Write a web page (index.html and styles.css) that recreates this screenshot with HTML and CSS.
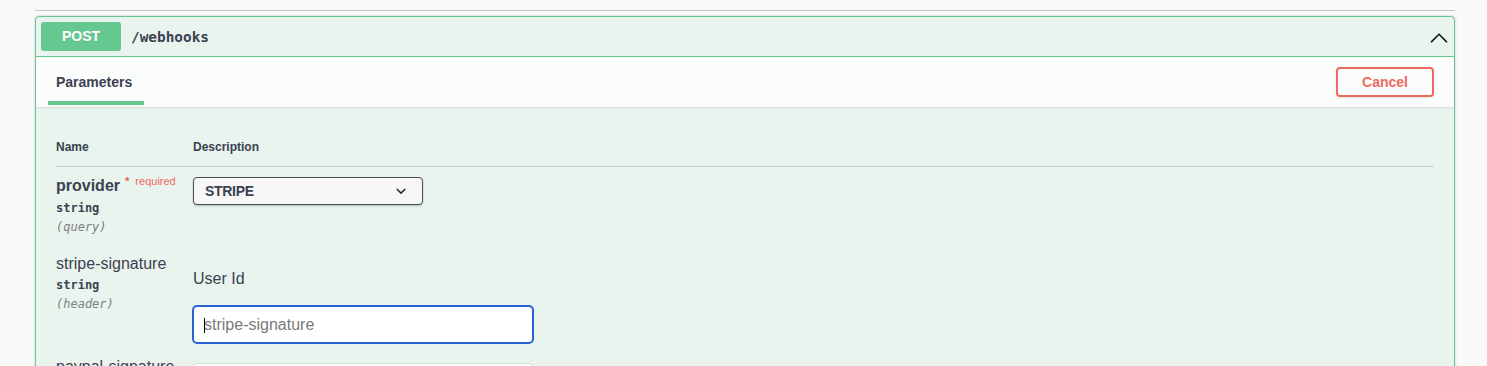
FILE: index.html
```html
<!DOCTYPE html>
<html lang="en">
<head>
<meta charset="utf-8">
<title>POST /webhooks</title>
<link rel="stylesheet" href="styles.css">
</head>
<body>
<div class="page">
  <div class="tag-divider"></div>
  <div class="opblock">
    <div class="summary">
      <span class="method">POST</span>
      <span class="path">/webhooks</span>
      <svg class="arrow" viewBox="0 0 20 20" aria-hidden="true"><path d="M17.418 14.908c-.27.272-.72.272-.99 0L10 8.482l-6.428 6.426c-.27.272-.72.272-.99 0s-.27-.72 0-.99l6.924-6.923c.27-.27.72-.27.99 0l6.922 6.923c.272.27.272.72 0 .99z"/></svg>
    </div>
    <div class="tab-header">
      <h4 class="tab-title"><span>Parameters</span></h4>
      <button class="btn-cancel" type="button">Cancel</button>
    </div>
    <div class="params">
      <div class="params-head">
        <div>Name</div>
        <div>Description</div>
      </div>

      <div class="param-row">
        <div class="param-meta">
          <div class="param-name param-name--required">provider<span class="req-star">&nbsp;*</span><span class="req-label">required</span></div>
          <div class="param-type">string</div>
          <div class="param-in">(query)</div>
        </div>
        <div class="param-desc">
          <div class="select-wrap">
            <select class="select">
              <option>STRIPE</option>
              <option>PAYPAL</option>
            </select>
            <svg class="select-arrow" viewBox="0 0 20 20" aria-hidden="true"><path d="M13.418 7.859a.695.695 0 01.978 0 .68.68 0 010 .969l-3.908 3.83a.697.697 0 01-.979 0l-3.908-3.830a.68.68 0 010-.969.695.695 0 01.978 0L10 11l3.418-3.141z"/></svg>
          </div>
        </div>
      </div>

      <div class="param-row">
        <div class="param-meta">
          <div class="param-name">stripe-signature</div>
          <div class="param-type">string</div>
          <div class="param-in">(header)</div>
        </div>
        <div class="param-desc">
          <p class="param-note">User Id</p>
          <div class="input-wrap is-focused">
            <input class="param-input" type="text" placeholder="stripe-signature">
          </div>
        </div>
      </div>

      <div class="param-row">
        <div class="param-meta">
          <div class="param-name">paypal-signature</div>
          <div class="param-type">string</div>
          <div class="param-in">(header)</div>
        </div>
        <div class="param-desc">
          <div class="input-wrap">
            <input class="param-input" type="text" placeholder="paypal-signature">
          </div>
        </div>
      </div>
    </div>
  </div>
</div>
</body>
</html>
```

FILE: styles.css
```css
* {
  box-sizing: border-box;
}

html {
  overflow: hidden;
}

body {
  margin: 0;
  background: #fafafa;
  color: #3b4151;
  font-family: "Liberation Sans", Arial, sans-serif;
}

.page {
  width: 1420px;
  margin-left: 35px;
}

.tag-divider {
  height: 11px;
  border-bottom: 1px solid #c3c5c9;
}

.opblock {
  margin-top: 5px;
  border: 1px solid #66c891;
  border-radius: 4px;
  background: #e9f4ee;
  box-shadow: 0 0 3px rgba(0, 0, 0, 0.19);
}

/* summary bar */
.summary {
  display: flex;
  align-items: center;
  padding: 5px;
  border-bottom: 1px solid #66c891;
}

.method {
  min-width: 80px;
  padding: 6px 0;
  border-radius: 3px;
  background: #66c891;
  color: #fff;
  font-size: 14px;
  font-weight: 700;
  line-height: 17px;
  text-align: center;
  text-shadow: 0 1px 0 rgba(0, 0, 0, 0.1);
}

.path {
  flex: 1;
  padding: 0 10px;
  color: #3b4151;
  font-family: "DejaVu Sans Mono", monospace;
  font-size: 14.4px;
  font-weight: 700;
}

.arrow {
  width: 22px;
  height: 22px;
  margin-right: -1px;
  fill: #111;
}

/* tab header */
.tab-header {
  display: flex;
  align-items: center;
  justify-content: space-between;
  min-height: 50px;
  padding: 8px 20px;
  background: rgba(255, 255, 255, 0.8);
  box-shadow: 0 1px 2px rgba(0, 0, 0, 0.1);
}

.tab-title {
  margin: 0;
  color: #3b4151;
  font-size: 14px;
  font-weight: 700;
}

.tab-title span {
  position: relative;
}

.tab-title span::after {
  content: "";
  position: absolute;
  left: -8px;
  bottom: -15px;
  width: 96px;
  height: 4px;
  background: #66c891;
}

.btn-cancel {
  width: 98px;
  height: 30px;
  padding: 0;
  border: 2px solid #ee6a5e;
  border-radius: 4px;
  background: transparent;
  color: #ee6a5e;
  font: 700 14px "Liberation Sans", Arial, sans-serif;
  box-shadow: 0 1px 2px rgba(0, 0, 0, 0.1);
}

/* parameters table */
.params {
  padding: 21px 20px 0;
}

.params-head {
  display: grid;
  grid-template-columns: 137px 1fr;
  padding: 12px 0;
  border-bottom: 1px solid #c6d1cd;
  font-size: 12px;
  font-weight: 700;
  line-height: 14px;
}

.param-row {
  display: grid;
  grid-template-columns: 137px 1fr;
  padding-top: 10px;
}

.param-name {
  font-size: 16px;
  line-height: 18px;
  white-space: nowrap;
}

.param-name--required {
  font-weight: 700;
}

.req-star {
  position: relative;
  top: -6px;
  margin-left: 2px;
  color: #e85a50;
  font-size: 11px;
}

.req-label {
  position: relative;
  top: -6px;
  margin-left: 6px;
  color: #ec6a63;
  font-size: 11px;
  font-weight: 400;
}

.param-type {
  margin-top: 5px;
  font-family: "DejaVu Sans Mono", monospace;
  font-size: 12px;
  font-weight: 600;
  line-height: 14px;
}

.param-in {
  margin: 5px 0 11px;
  color: #808080;
  font-family: "DejaVu Sans Mono", monospace;
  font-size: 12px;
  font-style: italic;
  line-height: 14px;
}

.param-desc {
  display: flex;
  flex-direction: column;
  align-items: flex-start;
}

.param-note {
  margin: 15px 0 13px;
  font-size: 16px;
  line-height: 18px;
}

/* select */
.select-wrap {
  position: relative;
}

.select {
  display: block;
  width: 230px;
  height: 28px;
  padding: 0 40px 0 11px;
  border: 1px solid #4a4e58;
  border-radius: 4px;
  background: #f7f7f7;
  color: #3b4151;
  font: 700 14px "Liberation Sans", Arial, sans-serif;
  letter-spacing: -0.3px;
  box-shadow: 0 1px 2px rgba(0, 0, 0, 0.25);
  appearance: none;
  -webkit-appearance: none;
}

.select-arrow {
  position: absolute;
  top: 4px;
  right: 12px;
  width: 20px;
  height: 20px;
  fill: #222;
  pointer-events: none;
}

/* inputs */
.input-wrap {
  position: relative;
  margin: 5px 0;
}

.param-input {
  display: block;
  width: 340px;
  height: 37px;
  padding: 0 10px;
  border: 1px solid #d9d9d9;
  border-radius: 4px;
  background: #fff;
  color: #3b4151;
  font: 16px "Liberation Sans", Arial, sans-serif;
  outline: none;
}

.param-input::placeholder {
  color: #7a7a7a;
}

.input-wrap.is-focused .param-input {
  border-color: #2a62d4;
  box-shadow: 0 0 0 1px #2a62d4;
}

.input-wrap.is-focused::before {
  content: "";
  position: absolute;
  top: 12px;
  left: 11px;
  width: 1px;
  height: 15px;
  background: #000;
  z-index: 1;
}
```
